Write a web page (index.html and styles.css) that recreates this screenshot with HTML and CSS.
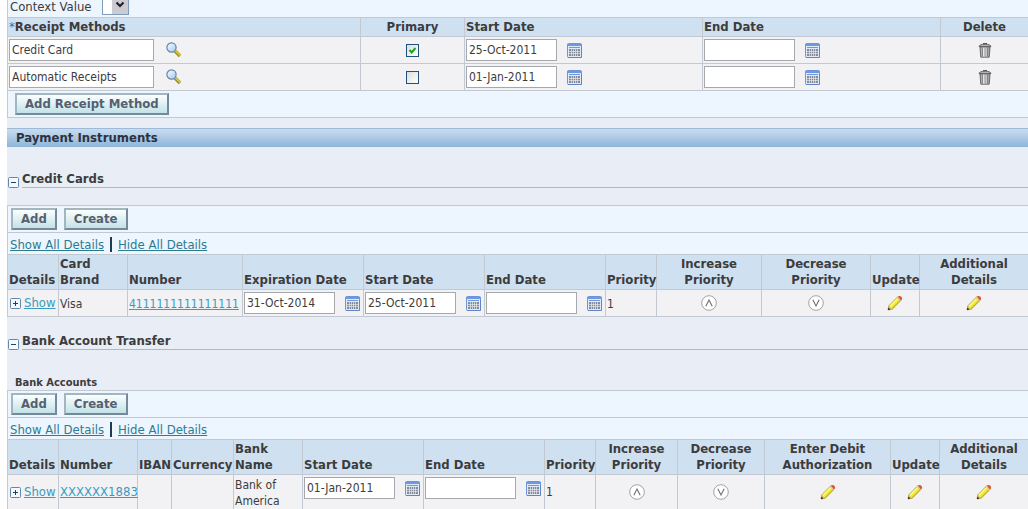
FILE: index.html
```html
<!DOCTYPE html>
<html lang="en">

<head>
    <meta charset="UTF-8">
    <title>Payment Details</title>
    <link rel="stylesheet" href="styles.css">
</head>

<body>

    <!-- shared icons -->
    <svg class="sprite" aria-hidden="true">
        <linearGradient id="g_lens" x1="0" y1="0" x2="1" y2="1">
            <stop offset="0" stop-color="#fff" />
            <stop offset="1" stop-color="#9cc8ee" />
        </linearGradient>
        <linearGradient id="g_can">
            <stop offset="0" stop-color="#8a8a8a" />
            <stop offset="0.4" stop-color="#f4f4f4" />
            <stop offset="1" stop-color="#8a8a8a" />
        </linearGradient>
        <symbol id="search" viewBox="0 0 16 16">
            <path d="M9 9l5 5" stroke="#9c9026" stroke-width="3.6" />
            <path d="M9.4 8.6l5 5" stroke="#d2c548" stroke-width="1.8" />
            <circle cx="5.5" cy="5.5" r="4.6" fill="url(#g_lens)" stroke="#6782a8" stroke-width="1.2" />
        </symbol>
        <symbol id="calendar" viewBox="0 0 15 15">
            <rect x="0.5" y="0.5" width="14" height="14" rx="1" fill="#dfeafa" stroke="#6e93d6" />
            <path d="M0 1h15v2H0z" fill="#6f98e2" />
            <path d="M2 4.5h11" stroke="#6f98e2" />
            <path d="M2 6h11v7H2z" fill="#858b96" />
            <path d="M2 8.5h11M2 10.500h11M4.500 6v7M6.500 6v7M8.500 6v7M10.500 6v7" stroke="#f2f5fa" stroke-width="0.6" />
            <path d="M14.5 4v10.5H1" fill="none" stroke="#5e84cc" />
        </symbol>
        <symbol id="trash" viewBox="0 0 14 16">
            <path d="M2 5h10l-0.8 10.2H2.8z" fill="url(#g_can)" stroke="#6a6a6a" />
            <path d="M4.5 6v8.5M7 6v8.5M9.500 6v8.5" stroke="#777" stroke-width="0.8" />
            <path d="M5 1.5h4" stroke="#555" />
            <path d="M1 4.5c0-3 12-3 12 0z" fill="#b5b5b5" stroke="#666" />
        </symbol>
        <symbol id="pencil" viewBox="0 0 16 16">
            <path d="M1 15l0.8-4.2L11 1.6l3.4 3.4-9.200 9.200z" fill="#f3e93c" stroke="#9a8f24" stroke-width="0.8" />
            <path d="M3 11.2l8.400-8.400" stroke="#fffa90" stroke-width="1.4" />
            <path d="M5 13.6l8.800-8.800" stroke="#c2ae1c" />
            <path d="M10.300 2.300l3.400 3.400" stroke="#c9c4b8" stroke-width="1.4" />
            <path d="M11 1.6c1-1.400 5-0.200 3.900 2.900L14 5.400z" fill="#e2552e" />
            <path d="M1 15l0.6-4 3.400 3.200z" fill="#cbb98a" />
            <path d="M1 15l0.4-2.400 2 2z" fill="#222" />
        </symbol>
        <symbol id="up" viewBox="0 0 16 16">
            <circle cx="8" cy="8" r="7.3" fill="#fff" stroke="#a2a2a2" />
            <path d="M4.8 11.2L8 5l3.2 6.2" fill="none" stroke="#777" stroke-width="1.2" />
        </symbol>
        <symbol id="down" viewBox="0 0 16 16">
            <circle cx="8" cy="8" r="7.3" fill="#fff" stroke="#a2a2a2" />
            <path d="M4.8 4.8L8 11l3.2-6.2" fill="none" stroke="#777" stroke-width="1.2" />
        </symbol>
        <symbol id="minus" viewBox="0 0 11 11">
            <rect x="0.5" y="0.5" width="10" height="10" rx="1" fill="#f4f9ff" stroke="#6089ae" />
            <path d="M3 5.5h5" stroke="#2c3f55" />
        </symbol>
        <symbol id="plus" viewBox="0 0 11 11">
            <rect x="0.5" y="0.5" width="10" height="10" rx="1" fill="#f4f9ff" stroke="#6089ae" />
            <path d="M3 5.5h5M5.5 3v5" stroke="#2c3f55" />
        </symbol>
    </svg>

    <div class="page">

        <div class="context">
            <label for="context_value">Context Value</label>
            <select id="context_value">
                <option></option>
            </select>
        </div>

        <table class="grid">
            <colgroup>
                <col class="w353">
                <col class="w104">
                <col class="w238">
                <col class="w238">
                <col>
            </colgroup>
            <tr>
                <th><span class="required">*</span>Receipt Methods</th>
                <th class="center">Primary</th>
                <th>Start Date</th>
                <th>End Date</th>
                <th class="center">Delete</th>
            </tr>
            <tr>
                <td>
                    <div class="field wide">
                        <input type="text" value="Credit Card" aria-label="Receipt Method">
                        <button class="icon" aria-label="Search"><svg><use href="#search" /></svg></button>
                    </div>
                </td>
                <td class="center"><input type="checkbox" aria-label="Primary" checked></td>
                <td>
                    <div class="field">
                        <input type="text" value="25-Oct-2011" aria-label="Start Date">
                        <button class="icon" aria-label="Calendar"><svg class="cal"><use href="#calendar" /></svg></button>
                    </div>
                </td>
                <td>
                    <div class="field">
                        <input type="text" aria-label="End Date">
                        <button class="icon" aria-label="Calendar"><svg class="cal"><use href="#calendar" /></svg></button>
                    </div>
                </td>
                <td class="center"><button class="icon" aria-label="Delete"><svg><use href="#trash" /></svg></button></td>
            </tr>
            <tr>
                <td>
                    <div class="field wide">
                        <input type="text" value="Automatic Receipts" aria-label="Receipt Method">
                        <button class="icon" aria-label="Search"><svg><use href="#search" /></svg></button>
                    </div>
                </td>
                <td class="center"><input type="checkbox" aria-label="Primary"></td>
                <td>
                    <div class="field">
                        <input type="text" value="01-Jan-2011" aria-label="Start Date">
                        <button class="icon" aria-label="Calendar"><svg class="cal"><use href="#calendar" /></svg></button>
                    </div>
                </td>
                <td>
                    <div class="field">
                        <input type="text" aria-label="End Date">
                        <button class="icon" aria-label="Calendar"><svg class="cal"><use href="#calendar" /></svg></button>
                    </div>
                </td>
                <td class="center"><button class="icon" aria-label="Delete"><svg><use href="#trash" /></svg></button></td>
            </tr>
        </table>
        <div class="toolbar footer">
            <button class="btn">Add Receipt Method</button>
        </div>

        <h1>Payment Instruments</h1>

        <div class="section">
            <button class="icon" aria-label="Collapse"><svg class="toggle"><use href="#minus" /></svg></button>
            <h2>Credit Cards</h2>
        </div>

        <div class="toolbar">
            <button class="btn">Add</button>
            <button class="btn">Create</button>
        </div>
        <div class="links">
            <a href="#">Show All Details</a>
            <span class="bar"></span>
            <a href="#">Hide All Details</a>
        </div>
        <table class="grid closed">
            <colgroup>
                <col class="w51">
                <col class="w69">
                <col class="w115">
                <col class="w121">
                <col class="w121">
                <col class="w121">
                <col class="w51">
                <col class="w105">
                <col class="w109">
                <col class="w49">
                <col>
            </colgroup>
            <tr>
                <th>Details</th>
                <th>Card<br>Brand</th>
                <th>Number</th>
                <th>Expiration Date</th>
                <th>Start Date</th>
                <th>End Date</th>
                <th>Priority</th>
                <th class="center">Increase<br>Priority</th>
                <th class="center">Decrease<br>Priority</th>
                <th class="center">Update</th>
                <th class="center">Additional<br>Details</th>
            </tr>
            <tr>
                <td>
                    <div class="show">
                        <svg class="toggle"><use href="#plus" /></svg>
                        <a href="#">Show</a>
                    </div>
                </td>
                <td class="text">Visa</td>
                <td class="text"><a href="#">4111111111111111</a></td>
                <td>
                    <div class="field">
                        <input type="text" value="31-Oct-2014" aria-label="Expiration Date">
                        <button class="icon" aria-label="Calendar"><svg class="cal"><use href="#calendar" /></svg></button>
                    </div>
                </td>
                <td>
                    <div class="field">
                        <input type="text" value="25-Oct-2011" aria-label="Start Date">
                        <button class="icon" aria-label="Calendar"><svg class="cal"><use href="#calendar" /></svg></button>
                    </div>
                </td>
                <td>
                    <div class="field">
                        <input type="text" aria-label="End Date">
                        <button class="icon" aria-label="Calendar"><svg class="cal"><use href="#calendar" /></svg></button>
                    </div>
                </td>
                <td class="text">1</td>
                <td class="center"><button class="icon" aria-label="Increase Priority"><svg><use href="#up" /></svg></button></td>
                <td class="center"><button class="icon" aria-label="Decrease Priority"><svg><use href="#down" /></svg></button></td>
                <td class="center"><button class="icon" aria-label="Update"><svg><use href="#pencil" /></svg></button></td>
                <td class="center"><button class="icon" aria-label="Additional Details"><svg><use href="#pencil" /></svg></button></td>
            </tr>
        </table>

        <div class="section second">
            <button class="icon" aria-label="Collapse"><svg class="toggle"><use href="#minus" /></svg></button>
            <h2>Bank Account Transfer</h2>
        </div>

        <h3>Bank Accounts</h3>
        <div class="toolbar">
            <button class="btn">Add</button>
            <button class="btn">Create</button>
        </div>
        <div class="links">
            <a href="#">Show All Details</a>
            <span class="bar"></span>
            <a href="#">Hide All Details</a>
        </div>
        <table class="grid">
            <colgroup>
                <col class="w51">
                <col class="w79">
                <col class="w34">
                <col class="w62">
                <col class="w69">
                <col class="w121">
                <col class="w121">
                <col class="w51">
                <col class="w82">
                <col class="w87">
                <col class="w126">
                <col class="w49">
                <col>
            </colgroup>
            <tr>
                <th>Details</th>
                <th>Number</th>
                <th>IBAN</th>
                <th>Currency</th>
                <th>Bank<br>Name</th>
                <th>Start Date</th>
                <th>End Date</th>
                <th>Priority</th>
                <th class="center">Increase<br>Priority</th>
                <th class="center">Decrease<br>Priority</th>
                <th class="center">Enter Debit<br>Authorization</th>
                <th class="center">Update</th>
                <th class="center">Additional<br>Details</th>
            </tr>
            <tr>
                <td>
                    <div class="show">
                        <svg class="toggle"><use href="#plus" /></svg>
                        <a href="#">Show</a>
                    </div>
                </td>
                <td class="account"><a href="#">XXXXXX1883</a></td>
                <td></td>
                <td></td>
                <td class="text">Bank of<br>America</td>
                <td class="top">
                    <div class="field">
                        <input type="text" value="01-Jan-2011" aria-label="Start Date">
                        <button class="icon" aria-label="Calendar"><svg class="cal"><use href="#calendar" /></svg></button>
                    </div>
                </td>
                <td class="top">
                    <div class="field">
                        <input type="text" aria-label="End Date">
                        <button class="icon" aria-label="Calendar"><svg class="cal"><use href="#calendar" /></svg></button>
                    </div>
                </td>
                <td>1</td>
                <td class="center"><button class="icon" aria-label="Increase Priority"><svg><use href="#up" /></svg></button></td>
                <td class="center"><button class="icon" aria-label="Decrease Priority"><svg><use href="#down" /></svg></button></td>
                <td class="center"><button class="icon" aria-label="Enter Debit Authorization"><svg><use href="#pencil" /></svg></button></td>
                <td class="center"><button class="icon" aria-label="Update"><svg><use href="#pencil" /></svg></button></td>
                <td class="center"><button class="icon" aria-label="Additional Details"><svg><use href="#pencil" /></svg></button></td>
            </tr>
        </table>

    </div>

</body>

</html>
```
FILE: styles.css
```css
* {
    box-sizing: border-box;
}

body {
    margin: 0;
    background-color: white;
    color: #3c3c3c;
    font: 12px/16px Tahoma, "DejaVu Sans Condensed", "DejaVu Sans", sans-serif;
}

input,
button,
select {
    margin: 0;
    font: inherit;
    color: inherit;
}

a {
    color: #3a9abf;
}

svg {
    display: block;
    width: 16px;
    height: 16px;
}

.sprite {
    position: absolute;
    width: 0;
    height: 0;
}

.cal {
    width: 15px;
    height: 15px;
}

.toggle {
    width: 11px;
    height: 11px;
}

.page {
    margin-left: 7px;
    background-color: #e9edf5;
}

/* context row, scrolled half out of view */
.context {
    display: flex;
    align-items: flex-end;
    gap: 10px;
    height: 17px;
    padding: 0 0 2px 2px;
    overflow: hidden;
    border-left: 1px solid #c3c9d3;
    background-color: #edf5ff;
    font-size: 13px;
}

.context select {
    appearance: none;
    width: 27px;
    height: 22px;
    border: 1px solid #7f9db9;
    border-radius: 0;
    background: white url("data:image/svg+xml,%3Csvg xmlns='http://www.w3.org/2000/svg' width='16' height='20'%3E%3Cpath d='M0 0h16v20H0z' fill='%23cbcbd3'/%3E%3Cpath d='M4.5 8.5L8 12l3.5-3.5' fill='none' stroke='%23222' stroke-width='2.2'/%3E%3C/svg%3E") no-repeat right center;
}

.grid {
    width: 100%;
    table-layout: fixed;
    border-spacing: 0;
}

.closed {
    border-bottom: 1px solid #c3c9d3;
}

th,
td {
    padding: 0 1px;
    border-top: 1px solid #c3c9d3;
    border-left: 1px solid #c3c9d3;
    text-align: left;
    white-space: nowrap;
}

th {
    padding-top: 1px;
    padding-bottom: 1px;
    background-color: #cfe0f1;
    font-size: 13px;
    vertical-align: bottom;
}

td {
    height: 27px;
    background-color: #f2f2f4;
}

.text {
    padding-top: 2px;
}

.center {
    text-align: center;
}

.top {
    padding-top: 2px;
    vertical-align: top;
}

.required {
    color: #3a6ea5;
    font-weight: normal;
}

.field {
    display: flex;
    align-items: center;
    gap: 10px;
}

.field input {
    width: 91px;
    height: 22px;
    padding: 0 2px;
    border: 1px solid #a5a8ad;
    background-color: white;
}

.wide {
    gap: 12px;
}

.wide input {
    width: 145px;
}

input[type="checkbox"] {
    appearance: none;
    display: block;
    width: 13px;
    height: 13px;
    margin: 0 auto;
    border: 1px solid #1c5180;
    background: linear-gradient(135deg, #dcdcd7, white);
}

input[type="checkbox"]:checked {
    background: url("data:image/svg+xml,%3Csvg xmlns='http://www.w3.org/2000/svg' width='11' height='11'%3E%3Cpath d='M2.5 5l2.2 2.5L8.5 3' fill='none' stroke='%2321a121' stroke-width='2'/%3E%3C/svg%3E"), linear-gradient(135deg, #dcdcd7, white);
}

.icon {
    display: inline-block;
    padding: 0;
    border: 0;
    background: none;
    vertical-align: middle;
}

.show {
    display: flex;
    align-items: center;
    gap: 3px;
    padding-left: 1px;
    font-size: 13px;
}

.account {
    font-size: 13px;
}

.toolbar {
    display: flex;
    gap: 7px;
    padding: 2px 3px;
    border-top: 1px solid #c3c9d3;
    border-left: 1px solid #c3c9d3;
    background-color: #edf5ff;
}

.footer {
    padding-left: 7px;
    border-bottom: 1px solid #c3c9d3;
}

.btn {
    height: 22px;
    padding: 0 8px;
    border: 2px solid;
    border-color: #a3b5bf #76899a #76899a #a3b5bf;
    background: linear-gradient(#fbfefe, #c2e2e8);
    color: #555f70;
    font-size: 13px;
    font-weight: bold;
    line-height: 16px;
}

.links {
    display: flex;
    align-items: center;
    gap: 6px;
    height: 22px;
    padding: 2px 2px 0;
    border-top: 1px solid #c3c9d3;
    border-left: 1px solid #c3c9d3;
    background-color: #edf5ff;
    font-size: 13px;
}

.links a {
    color: #2c7b93;
}

.bar {
    width: 2px;
    height: 15px;
    background-color: #1f3a54;
}

h1,
h2,
h3 {
    margin: 0;
    font-size: 13px;
    line-height: 16px;
}

h1 {
    margin-top: 10px;
    padding: 1px 9px;
    border-top: 1px solid #9dbbd8;
    background: linear-gradient(#c9dcef, #8db5da);
    color: #2b3340;
}

.section {
    display: flex;
    align-items: flex-end;
    gap: 3px;
    margin: 24px 0 17px;
    padding-left: 1px;
}

.section h2 {
    flex: 1;
    border-bottom: 1px solid #9dbdd9;
}

.second {
    margin: 16px 0 26px;
}

h3 {
    padding-left: 8px;
    font-size: 11px;
    line-height: 14px;
}

.w34 { width: 34px; }
.w49 { width: 49px; }
.w51 { width: 51px; }
.w62 { width: 62px; }
.w69 { width: 69px; }
.w79 { width: 79px; }
.w82 { width: 82px; }
.w87 { width: 87px; }
.w104 { width: 104px; }
.w105 { width: 105px; }
.w109 { width: 109px; }
.w115 { width: 115px; }
.w121 { width: 121px; }
.w126 { width: 126px; }
.w238 { width: 238px; }
.w353 { width: 353px; }
```
